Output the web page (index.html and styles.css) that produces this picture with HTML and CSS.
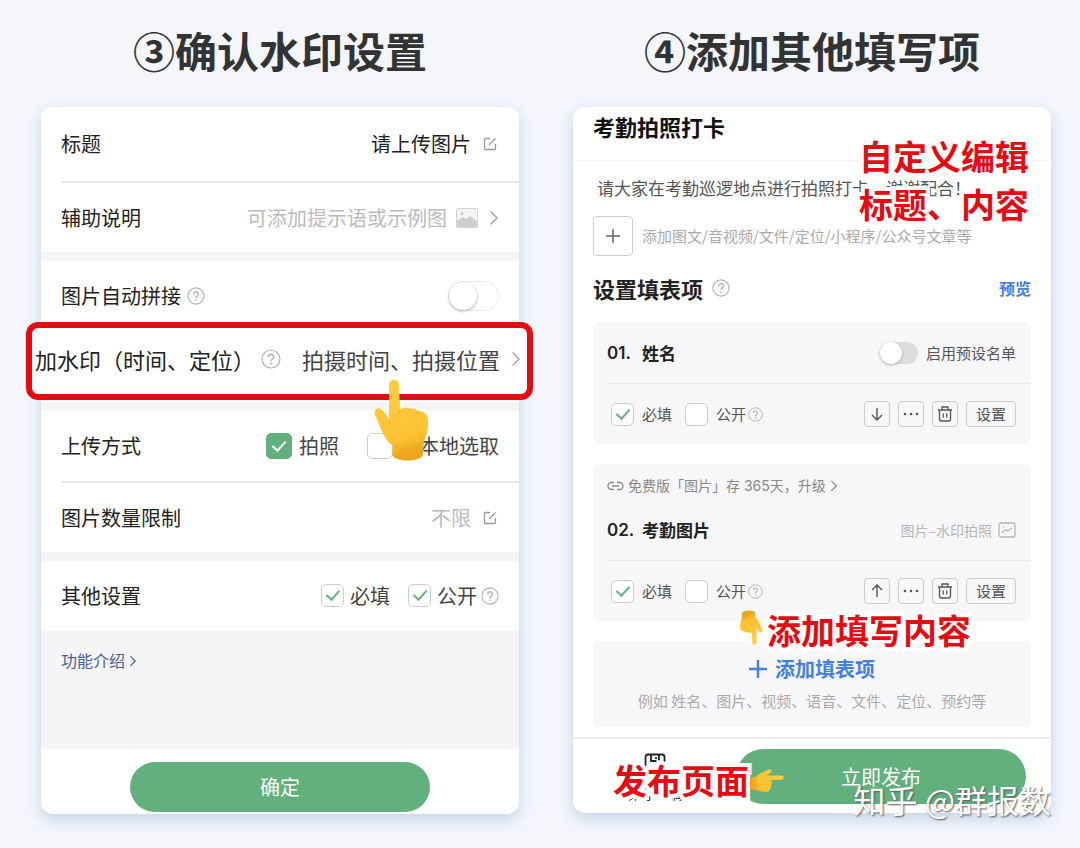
FILE: index.html
```html
<!doctype html>
<html lang="zh-CN">
<head>
    <meta charset="utf-8">
    <title>水印设置</title>
    <meta name="viewport" content="width=device-width, initial-scale=1">
    <link rel="stylesheet" href="styles.css">
</head>
<body>
<svg class="sprite" aria-hidden="true">
    <defs>
        <linearGradient id="skin" x1="0" y1="0" x2="0.2" y2="1">
            <stop offset="0" stop-color="#ffcf45"></stop>
            <stop offset="0.8" stop-color="#fcc232"></stop>
            <stop offset="1" stop-color="#eca51c"></stop>
        </linearGradient>
    </defs>
    <symbol id="help" viewBox="0 0 20 20">
        <circle cx="10" cy="10" r="9" fill="none" stroke="currentColor" stroke-width="1.2"></circle>
        <path d="M7.4 8a2.6 2.6 0 1 1 3.9 2.2c-.9.5-1.3 1-1.3 2" fill="none" stroke="currentColor" stroke-width="1.5"></path>
        <circle cx="10" cy="14.5" r="1" fill="currentColor"></circle>
    </symbol>
    <symbol id="edit" viewBox="0 0 14 14">
        <path d="M7 1.5H2.5q-1 0-1 1v9q0 1 1 1h9q1 0 1-1V7M6 8l6.5-6.5" fill="none" stroke="currentColor" stroke-width="1.3"></path>
    </symbol>
    <symbol id="chevron" viewBox="0 0 10 16">
        <path d="M1.5 1.5 8 8l-6.5 6.5" fill="none" stroke="currentColor" stroke-width="1.6"></path>
    </symbol>
    <symbol id="hand" viewBox="0 0 54 83">
        <path d="M15 6c0-7 10-7 10 0l1 25c2-3 7-3 10-1 3-1 6 0 8 2 7 0 10 4 10 10 0 9-1 14-4 20l-1 13c0 8-27 9-31 1l1-9C9 60 7 48 1 36c-2-5 3-9 7-5 4 3 6 8 7 10z" fill="url(#skin)"></path>
        <path d="M26 31c0 2-1 4-2 5M36 30l1 3M44 32l1 3M15 41l1 5M19 67c7 4 20 4 29-2" fill="none" stroke="#e2a01d" stroke-width="1" opacity=".6"></path>
    </symbol>
    <symbol id="dots" viewBox="0 0 18 18">
        <circle cx="3" cy="9" r="1.3" fill="currentColor"></circle>
        <circle cx="9" cy="9" r="1.3" fill="currentColor"></circle>
        <circle cx="15" cy="9" r="1.3" fill="currentColor"></circle>
    </symbol>
    <symbol id="trash" viewBox="0 0 18 18">
        <path d="M2 5h14M6 5V2h6v3M3.5 5v9q0 2 2 2h7q2 0 2-2V5M7.3 8.5v4M10.7 8.5v4" fill="none" stroke="currentColor" stroke-width="1.3"></path>
    </symbol>
    <symbol id="arrow-down" viewBox="0 0 18 18">
        <path d="M9 3v12M4 10l5 5 5-5" fill="none" stroke="currentColor" stroke-width="1.4"></path>
    </symbol>
    <symbol id="arrow-up" viewBox="0 0 18 18">
        <path d="M9 15V3M4 8l5-5 5 5" fill="none" stroke="currentColor" stroke-width="1.4"></path>
    </symbol>
</svg>

<main class="steps">
    <section class="step">
        <h1>③确认水印设置</h1>
        <form class="phone">
            <div class="row row-line row-first">
                <label for="title">标题</label>
                <input id="title" class="value" type="text" value="请上传图片">
                <svg class="edit"><use href="#edit"></use></svg>
            </div>
            <div class="row">
                <label for="tips">辅助说明</label>
                <input id="tips" class="value" type="text" placeholder="可添加提示语或示例图">
                <svg class="picture" viewBox="0 0 22 20">
                    <rect x="0.5" y="0.5" width="21" height="19" rx="1" fill="#f4f4f4" stroke="#d4d4d4"></rect>
                    <path d="M1 19v-6l6-4 3 2 4-3 7 5v6z" fill="#cfcfcf"></path>
                    <circle cx="6" cy="5.5" r="1.5" fill="#cfcfcf"></circle>
                </svg>
                <svg class="chevron"><use href="#chevron"></use></svg>
            </div>
            <hr>
            <div class="row">
                <label for="merge">图片自动拼接</label>
                <svg class="help"><use href="#help"></use></svg>
                <input id="merge" class="switch switch-large" type="checkbox">
            </div>
            <div class="highlight">
                <span>加水印（时间、定位）</span>
                <svg class="help help-large"><use href="#help"></use></svg>
                <button type="button" class="pick">拍摄时间、拍摄位置
                    <svg class="chevron"><use href="#chevron"></use></svg>
                </button>
                <svg class="hand-up"><use href="#hand"></use></svg>
            </div>
            <hr>
            <div class="row row-line">
                <span>上传方式</span>
                <div class="options options-wide">
                    <label><input class="check check-solid" type="checkbox" checked>拍照</label>
                    <label class="local"><input class="check check-solid" type="checkbox">本地选取</label>
                </div>
            </div>
            <div class="row">
                <label for="limit">图片数量限制</label>
                <input id="limit" class="value" type="text" placeholder="不限">
                <svg class="edit"><use href="#edit"></use></svg>
            </div>
            <hr>
            <div class="row">
                <span>其他设置</span>
                <div class="options">
                    <label><input class="check" type="checkbox" checked>必填</label>
                    <label><input class="check" type="checkbox" checked>公开</label>
                    <svg class="help"><use href="#help"></use></svg>
                </div>
            </div>
            <div class="intro">
                <a href="#">功能介绍 <svg><use href="#chevron"></use></svg></a>
            </div>
            <div class="confirm">
                <button type="button" class="primary">确定</button>
            </div>
        </form>
    </section>

    <section class="step">
        <h1>④添加其他填写项</h1>
        <form class="phone">
            <div class="headline">
                <input type="text" aria-label="标题" value="考勤拍照打卡">
            </div>
            <input class="description" type="text" aria-label="内容" value="请大家在考勤巡逻地点进行拍照打卡，谢谢配合！">
            <div class="attach">
                <button type="button" aria-label="添加">
                    <svg viewBox="0 0 16 16"><path d="M8 1v14M1 8h14" stroke="currentColor" stroke-width="1.5"></path></svg>
                </button>
                <span>添加图文/音视频/文件/定位/小程序/公众号文章等</span>
            </div>
            <div class="section-title">
                <h2>设置填表项</h2>
                <svg class="help"><use href="#help"></use></svg>
                <a href="#">预览</a>
            </div>

            <div class="field">
                <div class="field-main">
                    <span class="number">01.</span>
                    <strong>姓名</strong>
                    <label class="preset"><input class="switch" type="checkbox">启用预设名单</label>
                </div>
                <div class="field-actions">
                    <label><input class="check" type="checkbox" checked>必填</label>
                    <label><input class="check" type="checkbox">公开</label>
                    <svg class="help help-small"><use href="#help"></use></svg>
                    <div class="tools">
                        <button type="button" aria-label="下移"><svg><use href="#arrow-down"></use></svg></button>
                        <button type="button" aria-label="更多"><svg><use href="#dots"></use></svg></button>
                        <button type="button" aria-label="删除"><svg><use href="#trash"></use></svg></button>
                        <button type="button" class="setting">设置</button>
                    </div>
                </div>
            </div>

            <div class="field">
                <a class="upgrade" href="#">
                    <svg class="link" viewBox="0 0 17 10"><path d="M7 8.5H4.500a3.500 3.500 0 0 1 0-7H7M10 1.500h2.500a3.500 3.500 0 0 1 0 7H10M5 5h7" fill="none" stroke="currentColor" stroke-width="1.3"></path></svg>
                    免费版「图片」存 365天，升级
                    <svg class="more"><use href="#chevron"></use></svg>
                </a>
                <div class="field-main">
                    <span class="number">02.</span>
                    <strong>考勤图片</strong>
                    <span class="kind">图片–水印拍照
                        <svg viewBox="0 0 18 16"><rect x="1" y="1" width="16" height="14" rx="2" fill="none" stroke="currentColor" stroke-width="1.3"></rect><path d="M4 11q3-5 6-2l4-3M5 5h1" fill="none" stroke="currentColor" stroke-width="1.3"></path></svg>
                    </span>
                </div>
                <div class="field-actions">
                    <label><input class="check" type="checkbox" checked>必填</label>
                    <label><input class="check" type="checkbox">公开</label>
                    <svg class="help help-small"><use href="#help"></use></svg>
                    <div class="tools">
                        <button type="button" aria-label="上移"><svg><use href="#arrow-up"></use></svg></button>
                        <button type="button" aria-label="更多"><svg><use href="#dots"></use></svg></button>
                        <button type="button" aria-label="删除"><svg><use href="#trash"></use></svg></button>
                        <button type="button" class="setting">设置</button>
                    </div>
                </div>
            </div>

            <div class="field add">
                <button type="button">
                    <svg viewBox="0 0 18 18"><path d="M9 0v18M0 9h18" stroke="currentColor" stroke-width="2.4"></path></svg>
                    添加填表项
                </button>
                <p>例如 姓名、图片、视频、语音、文件、定位、预约等</p>
                <div class="note note-add">
                    <svg class="hand-down" viewBox="0 0 54 83"><g transform="rotate(180 27 41.5)"><use href="#hand" width="54" height="83"></use></g></svg>
                    <span>添加填写内容</span>
                </div>
            </div>

            <div class="publish">
                <button type="button" class="save">
                    <svg viewBox="0 0 22 20"><path d="M1.5 18V4q0-2.500 2.500-2.500h14q2.500 0 2.500 2.500v14zM7 2v6h8V2M12 4v2" fill="none" stroke="currentColor" stroke-width="1.8"></path></svg>
                    保存草稿
                </button>
                <button type="button" class="primary">立即发布</button>
                <div class="note note-publish">
                    <span>发布页面</span>
                    <svg class="hand-right" viewBox="0 0 83 54"><g transform="translate(83 0) rotate(90)"><use href="#hand" width="54" height="83"></use></g></svg>
                </div>
                <div class="watermark">知乎 @群报数</div>
            </div>

            <div class="note note-title">自定义编辑<br>标题、内容</div>
        </form>
    </section>
</main>
</body>
</html>
```

FILE: styles.css
```css
* {
    box-sizing: border-box;
}

body {
    margin: 0;
    background-color: #f4f6fb;
    color: #222;
    font-family: "Noto Sans CJK SC", sans-serif;
    font-size: 20px;
    line-height: 28px;
}

input,
button {
    margin: 0;
    padding: 0;
    border: 0;
    background: none;
    font: inherit;
    color: inherit;
}

button {
    cursor: pointer;
}

a {
    text-decoration: none;
}

svg {
    flex: none;
}

.sprite {
    position: absolute;
    width: 0;
    height: 0;
}

.steps {
    display: grid;
    grid-template-columns: 1fr 1fr;
    gap: 54px;
    padding: 20px 29px 34px 41px;
}

.step h1 {
    margin: 0 0 27px;
    color: #333;
    font-size: 42px;
    line-height: 60px;
    text-align: center;
}

.phone {
    position: relative;
    background-color: #fff;
    border-radius: 12px;
    box-shadow: 0 6px 16px #c5d2e6;
}

.phone hr {
    height: 9px;
    margin: 0;
    border: 0;
    background-color: #f5f5f6;
}

/* settings rows */
.row {
    display: flex;
    align-items: center;
    min-height: 69px;
    margin-left: 20px;
    padding-right: 20px;
}

.row-line {
    min-height: 72px;
    border-bottom: 2px solid #e8e8e8;
}

.row-first {
    min-height: 76px;
}

.value {
    flex: 1;
    min-width: 0;
    text-align: right;
}

.value::placeholder {
    color: #bbb;
}

.edit {
    width: 14px;
    height: 14px;
    margin: 0 2px 0 12px;
    color: #999;
}

.picture {
    width: 22px;
    height: 20px;
    margin-left: 9px;
}

.chevron {
    width: 10px;
    height: 16px;
    margin-left: 11px;
    color: #aaa;
}

.help {
    width: 18px;
    height: 18px;
    margin-left: 6px;
    color: #b0b0b0;
}

.help-large {
    width: 20px;
    height: 20px;
}

.help-small {
    width: 15px;
    height: 15px;
    margin-left: 2px;
}

.highlight {
    position: relative;
    display: flex;
    align-items: center;
    height: 78px;
    margin: -8px -14px 2px -15px;
    padding: 0 6px 4px 3px;
    border: 6px solid #e60b12;
    border-radius: 12px;
    background-color: #fff;
    font-size: 22px;
}

.pick {
    display: flex;
    align-items: center;
    margin-left: auto;
    color: #444;
}

.hand-up {
    position: absolute;
    z-index: 1;
    top: 51px;
    right: 99px;
    width: 54px;
    height: 83px;
}

.switch {
    position: relative;
    width: 38px;
    height: 22px;
    border-radius: 12px;
    background-color: #ddd;
    appearance: none;
}

.switch::after {
    content: "";
    position: absolute;
    top: 0;
    left: 0;
    width: 22px;
    height: 22px;
    border-radius: 50%;
    background-color: #fff;
    box-shadow: 0 1px 3px #aaa;
}

.switch-large {
    width: 51px;
    height: 30px;
    margin-left: auto;
    border: 1px solid #e8e8e8;
    border-radius: 15px;
    background-color: #fff;
}

.switch-large::after {
    width: 28px;
    height: 28px;
}

.options {
    display: flex;
    align-items: center;
    margin-left: auto;
    color: #444;
}

.options label {
    display: flex;
    align-items: center;
    gap: 6px;
    margin-left: 18px;
}

.options .help {
    margin-left: 4px;
}

.options-wide label {
    gap: 7px;
    margin-left: 28px;
}

.options-wide .local {
    gap: 26px;
}

.check {
    display: grid;
    place-items: center;
    width: 23px;
    height: 23px;
    border: 1px solid #ccc;
    border-radius: 5px;
    background-color: #fff;
    appearance: none;
}

.check:checked::after {
    content: "";
    width: 6px;
    height: 11px;
    margin-top: -4px;
    border: solid #62b07e;
    border-width: 0 2px 2px 0;
    transform: rotate(42deg);
}

.check-solid {
    width: 26px;
    height: 26px;
}

.check-solid:checked {
    border-color: #62b07e;
    background-color: #62b07e;
}

.check-solid:checked::after {
    border-color: #fff;
}

.intro {
    min-height: 119px;
    padding: 16px 20px;
    background-color: #f5f5f7;
    font-size: 16px;
}

.intro a {
    color: #4a5c9c;
}

.intro svg {
    width: 8px;
    height: 12px;
}

.confirm {
    padding: 13px 89px 2px;
}

.primary {
    background-color: #62b07e;
    color: #fff;
}

.confirm .primary {
    display: block;
    width: 100%;
    height: 50px;
    border-radius: 25px;
}

/* form editor */
.headline {
    padding: 0 20px 15px;
    border-bottom: 1px solid #f2f2f2;
    font-size: 22px;
    font-weight: 700;
}

.headline input {
    width: 100%;
    height: 38px;
    color: #111;
}

.description {
    display: block;
    width: 100%;
    height: 52px;
    padding: 0 24px;
    color: #555;
    font-size: 17px;
}

.attach {
    display: flex;
    align-items: center;
    gap: 9px;
    margin: 3px 20px 0;
    color: #aaa;
    font-size: 15px;
}

.attach button {
    display: grid;
    place-items: center;
    width: 40px;
    height: 40px;
    border: 1px solid #ccc;
    border-radius: 4px;
    color: #666;
}

.attach svg {
    width: 16px;
    height: 16px;
}

.section-title {
    display: flex;
    align-items: center;
    height: 66px;
    padding: 0 20px 2px;
}

.section-title h2 {
    margin: 0;
    font-size: 22px;
}

.section-title .help {
    margin-left: 9px;
}

.section-title a {
    margin-left: auto;
    color: #4580e0;
    font-size: 16px;
    font-weight: 700;
}

.field {
    margin: 0 20px 20px;
    border-radius: 6px;
    background-color: #f7f7f9;
    color: #555;
    font-size: 15px;
}

.field-main {
    display: flex;
    align-items: center;
    height: 62px;
    margin-left: 14px;
    padding-right: 15px;
    border-bottom: 1px solid #ececee;
}

.field-main strong,
.number {
    color: #222;
    font-size: 17px;
    font-weight: 700;
}

.number {
    width: 35px;
    font-family: Inter, sans-serif;
    font-weight: 600;
}

.preset {
    display: flex;
    align-items: center;
    gap: 8px;
    margin-left: auto;
}

.kind {
    display: flex;
    align-items: center;
    gap: 6px;
    margin-left: auto;
    color: #b5b5b5;
    font-size: 14px;
}

.kind svg {
    width: 18px;
    height: 16px;
}

.field-actions {
    display: flex;
    align-items: center;
    height: 60px;
    padding: 0 15px 0 18px;
}

.field-actions label {
    display: flex;
    align-items: center;
    gap: 8px;
}

.field-actions label + label {
    margin-left: 13px;
}

.tools {
    display: flex;
    gap: 8px;
    margin-left: auto;
}

.tools button {
    display: grid;
    place-items: center;
    width: 26px;
    height: 26px;
    border: 1px solid #ccc;
    border-radius: 4px;
    line-height: 22px;
}

.tools .setting {
    width: 50px;
}

.tools svg {
    width: 18px;
    height: 18px;
}

.upgrade {
    display: flex;
    align-items: center;
    gap: 4px;
    padding: 9px 14px 0;
    color: #888;
    font-family: Inter, "Noto Sans CJK SC", sans-serif;
    font-size: 14px;
    line-height: 26px;
}

.link {
    width: 17px;
    height: 10px;
}

.more {
    width: 8px;
    height: 12px;
}

.add {
    position: relative;
    margin-bottom: 10px;
    padding: 14px 0 12px;
    text-align: center;
}

.add button {
    display: inline-flex;
    align-items: center;
    gap: 8px;
    color: #4580e0;
    font-size: 20px;
    font-weight: 700;
    vertical-align: top;
}

.add button svg {
    width: 18px;
    height: 18px;
}

.add p {
    margin: 4px 0 0;
    color: #aaa;
}

.publish {
    position: relative;
    display: flex;
    padding: 10px 25px 9px 0;
    border-top: 2px solid #eee;
}

.publish .primary {
    width: 64%;
    height: 55px;
    border-radius: 28px;
}

.save {
    display: flex;
    flex: 1;
    flex-direction: column;
    align-items: center;
    gap: 10px;
    padding-top: 4px;
    font-size: 14px;
    line-height: 20px;
}

.save svg {
    width: 22px;
    height: 20px;
}

/* annotations */
.note {
    position: absolute;
    display: flex;
    color: #e60b12;
    font-size: 34px;
    font-weight: 700;
    line-height: 40px;
    white-space: nowrap;
    -webkit-text-stroke: 8px #fff;
    paint-order: stroke fill;
}

.note-title {
    display: block;
    top: 25px;
    right: 22px;
    line-height: 48px;
}

.note-add {
    top: -31px;
    left: 147px;
    gap: 4px;
}

.note-publish {
    top: 21px;
    left: 40px;
    align-items: center;
}

.hand-down {
    width: 23px;
    height: 35px;
}

.hand-right {
    width: 35px;
    height: 23px;
}

.watermark {
    position: absolute;
    top: 40px;
    right: 0;
    color: #fff;
    font-size: 32px;
    line-height: 40px;
    text-shadow: 1px 1px 2px #555;
    white-space: nowrap;
}
```
